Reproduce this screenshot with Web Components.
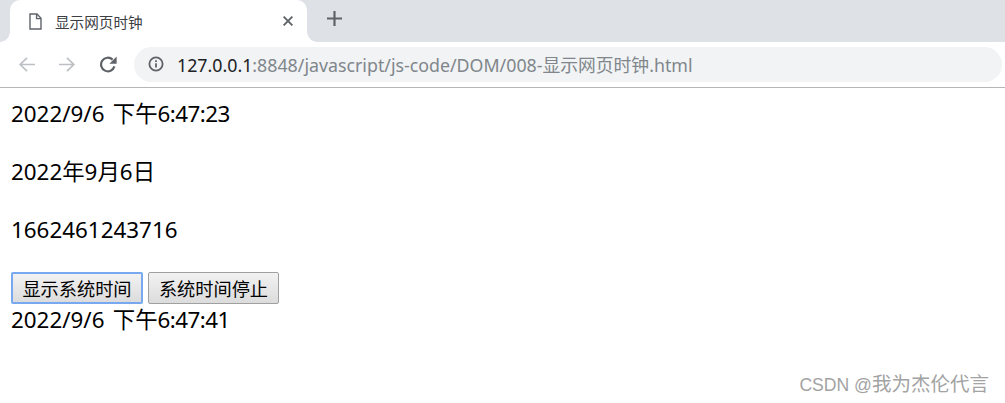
<!DOCTYPE html>
<html lang="zh">
<head>
<meta charset="utf-8">
<title>显示网页时钟</title>
<style>
html,body{margin:0;height:100%;background:#fff;overflow:hidden}
body{position:relative;width:1005px;height:403px;font-family:"Noto Sans","Noto Sans CJK SC",sans-serif}
</style>
</head>
<body>
<browser-tabs title-text="显示网页时钟"></browser-tabs>
<browser-toolbar host-text="127.0.0.1" rest-text=":8848/javascript/js-code/DOM/008-显示网页时钟.html"></browser-toolbar>
<clock-page></clock-page>
<water-mark><span style="font-size:17.6px">CSDN @</span>我为杰伦代言</water-mark>

<script>
window.customElements.define('browser-tabs', class extends HTMLElement {
  constructor(){ super(); this.attachShadow({mode:'open'}); }
  connectedCallback(){
    this.shadowRoot.innerHTML = `
    <style>
    :host{display:flex;height:42px;background:#dee1e6;padding-left:10px;align-items:flex-end;box-sizing:border-box}
    .tab{position:relative;width:297px;height:42px;background:#fff;border-radius:10px 10px 0 0;display:flex;align-items:center;box-sizing:border-box;padding:0 14px 0 19px;color:#3c4043}
    .tab::before,.tab::after{content:"";position:absolute;bottom:0;width:10px;height:10px;background:radial-gradient(circle at var(--c) 0,#dee1e6 9.5px,#fff 10px)}
    .tab::before{left:-10px;--c:0}
    .tab::after{right:-10px;--c:100%}
    .title{margin-left:13px;font-size:14.6px;flex:1;font-family:"Noto Sans CJK SC",sans-serif}
    .plus{margin-left:20px;margin-bottom:6px;align-self:center}
    svg{display:block}
    </style>
    <div class="tab">
      <svg width="13" height="17" viewBox="0 0 13 17" fill="none" stroke="#5f6368" stroke-width="1.4"><path d="M1 1h7l4 4.2V16H1z"/><path d="M7.6 1v4.6H12"/></svg>
      <span class="title">${this.getAttribute('title-text')}</span>
      <svg width="10" height="10" viewBox="0 0 10 10" stroke="#5f6368" stroke-width="1.9"><path d="M.6.6l8.8 8.8M9.4.6L.6 9.4"/></svg>
    </div>
    <svg class="plus" width="15" height="15" viewBox="0 0 15 15" stroke="#5f6368" stroke-width="2.2"><path d="M7.5 0v15M0 7.5h15"/></svg>`;
  }
});

window.customElements.define('browser-toolbar', class extends HTMLElement {
  constructor(){ super(); this.attachShadow({mode:'open'}); }
  connectedCallback(){
    this.shadowRoot.innerHTML = `
    <style>
    :host{display:flex;align-items:center;height:46px;box-sizing:border-box;background:#fff;border-bottom:1px solid #b6b6b6;padding:0 0 1px 19px}
    svg{display:block;flex:none}
    .fwd{margin-left:24px}
    .reload{margin-left:24px}
    .omni{margin-left:17px;flex:none;width:868px;height:35px;border-radius:17.5px;background:#f1f3f4;display:flex;align-items:center;padding-left:14px;box-sizing:border-box;font-size:17.8px;font-family:"Noto Sans","Noto Sans CJK SC",sans-serif}
    .url{margin-left:13px;color:#80868b;white-space:nowrap}
    .host{color:#202124}
    </style>
    <svg width="16" height="15" viewBox="0 0 16 15" fill="none" stroke="#bcc0c4" stroke-width="1.7"><path d="M16 7.5H1.6M8 .8L1.2 7.5 8 14.2"/></svg>
    <svg class="fwd" width="16" height="15" viewBox="0 0 16 15" fill="none" stroke="#bcc0c4" stroke-width="1.7"><path d="M0 7.5h14.4M8 .8l6.8 6.7L8 14.2"/></svg>
    <svg class="reload" width="18" height="17" viewBox="0 0 18 17" fill="none"><path d="M15.4 10.4A6.8 6.8 0 1 1 13.6 3.6" stroke="#5f6368" stroke-width="2.2"/><path d="M17.6 .6v7.2h-7.2z" fill="#5f6368"/></svg>
    <div class="omni">
      <svg width="16" height="16" viewBox="0 0 16 16" fill="none"><circle cx="8" cy="8" r="6.6" stroke="#5f6368" stroke-width="1.8"/><path d="M8 7.2v4.4M8 4.2v1.8" stroke="#5f6368" stroke-width="1.8"/></svg>
      <span class="url"><span class="host">${this.getAttribute('host-text')}</span>${this.getAttribute('rest-text')}</span>
    </div>`;
  }
});

window.customElements.define('clock-page', class extends HTMLElement {
  constructor(){ super(); this.attachShadow({mode:'open'}); }
  connectedCallback(){
    this.shadowRoot.innerHTML = `
    <style>
    :host{display:block;padding:10px 11px 0;color:#000;font-size:22.4px;line-height:32px;font-family:"Noto Sans","Noto Sans CJK SC",sans-serif}
    .line{height:32px;margin-bottom:26px;white-space:nowrap}
    .stamp{word-spacing:2.5px}
    .time{letter-spacing:-.55px}
    .buttons{display:flex;gap:5px;height:32px}
    </style>
    <div class="line stamp">2022/9/6 下午<span class="time">6:47:23</span></div>
    <div class="line">2022年9月6日</div>
    <div class="line">1662461243716</div>
    <div class="buttons">
      <push-button focused>显示系统时间</push-button>
      <push-button>系统时间停止</push-button>
    </div>
    <div class="stamp">2022/9/6 下午<span class="time">6:47:41</span></div>`;
  }
});

window.customElements.define('push-button', class extends HTMLElement {
  constructor(){ super(); this.attachShadow({mode:'open'}); }
  connectedCallback(){
    this.shadowRoot.innerHTML = `
    <style>
    :host{display:block}
    button{display:block;width:131px;height:32px;padding:0;margin:0;box-sizing:border-box;border:1px solid #a0a0a0;border-radius:2px;background:linear-gradient(#f2f2f2,#dcdcdc);color:#000;font:18.2px/30px "Noto Sans CJK SC",sans-serif}
    :host([focused]) button{border:2px solid #78a9f0;line-height:28px;width:132px}
    </style>
    <button><slot></slot></button>`;
  }
});

window.customElements.define('water-mark', class extends HTMLElement {
  constructor(){ super(); this.attachShadow({mode:'open'}); }
  connectedCallback(){
    this.shadowRoot.innerHTML = `
    <style>
    :host{display:block;position:absolute;right:16px;top:372px;color:#a3a3a3;font-size:19.5px;line-height:24px;font-family:"Liberation Sans","Noto Sans CJK SC",sans-serif;white-space:nowrap}
    </style>
    <slot></slot>`;
  }
});
</script>
</body>
</html>
